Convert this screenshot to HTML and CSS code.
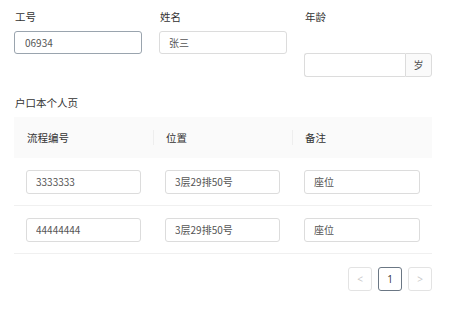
FILE: index.html
```html
<!DOCTYPE html>
<html lang="zh">
<head>
  <meta charset="UTF-8">
  <title>户口本</title>
  <link rel="stylesheet" href="styles.css">
</head>
<body>
  <div class="page">
    <div class="form-row">
      <div class="field">
        <label>工号</label>
        <input class="input input-active" value="06934">
      </div>
      <div class="field">
        <label>姓名</label>
        <input class="input" value="张三">
      </div>
      <div class="field">
        <label>年龄</label>
        <div class="spacer"></div>
        <div class="group">
          <input class="input" value="">
          <span class="addon">岁</span>
        </div>
      </div>
    </div>

    <div class="section-title">户口本个人页</div>

    <table class="table">
      <thead>
        <tr>
          <th>流程编号</th>
          <th>位置</th>
          <th>备注</th>
        </tr>
      </thead>
      <tbody>
        <tr>
          <td><input class="input" value="3333333"></td>
          <td><input class="input" value="3层29排50号"></td>
          <td><input class="input" value="座位"></td>
        </tr>
        <tr>
          <td><input class="input" value="44444444"></td>
          <td><input class="input" value="3层29排50号"></td>
          <td><input class="input" value="座位"></td>
        </tr>
      </tbody>
    </table>

    <div class="pager">
      <button class="page-btn disabled">&lt;</button>
      <button class="page-btn active">1</button>
      <button class="page-btn disabled">&gt;</button>
    </div>
  </div>
</body>
</html>
```

FILE: styles.css
```css
body {
  margin: 0;
  font-family: "Noto Sans CJK SC", "Open Sans", sans-serif;
  font-size: 10.5px;
  color: #333;
  background: #fff;
}
.page {
  width: 418px;
  padding: 10px 0 0 14px;
}
.form-row {
  display: grid;
  grid-template-columns: 128px 128px 128px;
  column-gap: 17px;
}
.field label {
  display: block;
  height: 14px;
  line-height: 14px;
  padding-left: 1px;
  margin-bottom: 7px;
}
.spacer {
  height: 22px;
}
.input {
  box-sizing: border-box;
  width: 100%;
  height: 23px;
  border: 1px solid #dcdcdc;
  border-radius: 3px;
  padding: 0 9px;
  font-family: inherit;
  font-size: 10px;
  color: #555;
  outline: none;
  background: #fff;
}
.input-active {
  border-color: #9aa4ae;
  padding-left: 10px;
}
.group {
  display: flex;
  height: 24px;
}
.group .input {
  height: 24px;
  border-radius: 3px 0 0 3px;
  border-right: none;
}
.addon {
  flex: 0 0 27px;
  box-sizing: border-box;
  border: 1px solid #dcdcdc;
  border-radius: 0 3px 3px 0;
  background: #fafafa;
  text-align: center;
  line-height: 22px;
  font-size: 10px;
  color: #555;
}
.section-title {
  margin-top: 19px;
  padding-left: 1px;
  height: 14px;
  line-height: 14px;
}
.table {
  margin-top: 7px;
  width: 418px;
  border-collapse: collapse;
}
.table th {
  position: relative;
  height: 41px;
  background: #fafafa;
  text-align: left;
  font-weight: normal;
  padding: 0 0 0 13px;
}
.table th + th::before {
  content: "";
  position: absolute;
  left: 0;
  top: 13px;
  height: 15px;
  width: 1px;
  background: #eeeeee;
}
.table th:nth-child(1) { width: 126px; }
.table th:nth-child(2) { width: 126px; }
.table td {
  height: 47px;
  padding: 0 12px 0 12px;
  border-bottom: 1px solid #f0f0f0;
}
.table td .input {
  height: 24px;
}
.pager {
  display: flex;
  justify-content: flex-end;
  gap: 6px;
  margin-top: 13px;
}
.page-btn {
  box-sizing: border-box;
  width: 24px;
  height: 24px;
  padding: 0;
  border: 1px solid #e3e3e3;
  border-radius: 3px;
  background: #fff;
  font-family: "Open Sans", sans-serif;
  font-size: 10px;
  color: #333;
}
.page-btn.disabled {
  color: #c8c8c8;
}
.page-btn.active {
  border-color: #6b7784;
}
```
